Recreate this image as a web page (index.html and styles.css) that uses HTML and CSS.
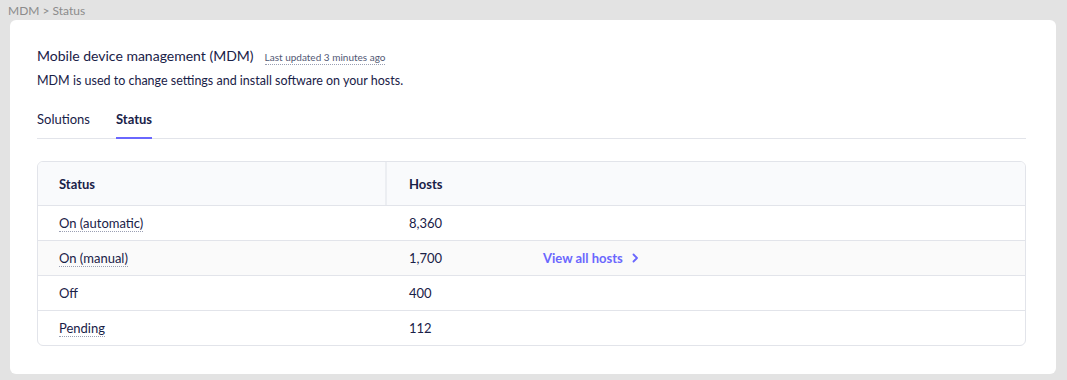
FILE: index.html
```html
<!DOCTYPE html>
<html>
<head>
<meta charset="utf-8">
<link rel="stylesheet" href="styles.css">
</head>
<body>
<div class="page">
  <div class="crumb">MDM &gt; Status</div>
  <div class="card">
    <div class="title-row">
      <h1 class="title">Mobile device management (MDM)</h1>
      <span class="updated">Last updated 3 minutes ago</span>
    </div>
    <p class="desc">MDM is used to change settings and install software on your hosts.</p>
    <div class="tabs">
      <div class="tab">Solutions</div>
      <div class="tab active">Status</div>
    </div>
    <div class="table">
      <div class="row head">
        <div class="c1">Status</div>
        <div class="c2">Hosts</div>
        <div class="c3"></div>
      </div>
      <div class="row">
        <div class="c1"><span class="dotted">On (automatic)</span></div>
        <div class="c2">8,360</div>
        <div class="c3"></div>
      </div>
      <div class="row hover">
        <div class="c1"><span class="dotted">On (manual)</span></div>
        <div class="c2">1,700</div>
        <div class="c3"><span class="link">View all hosts <svg width="8" height="10" viewBox="0 0 8 10"><path d="M2.5 1.5 L6 5 L2.5 8.5" fill="none" stroke="#6a67fe" stroke-width="1.8" stroke-linecap="round" stroke-linejoin="round"/></svg></span></div>
      </div>
      <div class="row">
        <div class="c1">Off</div>
        <div class="c2">400</div>
        <div class="c3"></div>
      </div>
      <div class="row last">
        <div class="c1"><span class="dotted">Pending</span></div>
        <div class="c2">112</div>
        <div class="c3"></div>
      </div>
    </div>
  </div>
</div>
</body>
</html>
```
FILE: styles.css
```css
html, body {
  margin: 0;
  padding: 0;
  background: #e3e3e3;
  font-family: Lato, "Noto Sans", sans-serif;
  color: #192147;
}
*, *::before, *::after {
  box-sizing: border-box;
}
.page {
  padding: 4px 11px 0 10px;
}
.crumb {
  font-size: 12px;
  color: #8b8b8b;
  line-height: 14px;
  margin-left: -2px;
  height: 16px;
}
.card {
  background: #fff;
  border-radius: 6px;
  padding: 26px 30px 28px 27px;
}
.title-row {
  display: flex;
  align-items: baseline;
  gap: 11px;
}
.title {
  margin: 0;
  font-size: 14px;
  font-weight: 400;
  line-height: 20px;
}
.updated {
  font-size: 10px;
  color: #515774;
  border-bottom: 1px dotted #9a9fb3;
  line-height: 14px;
}
.desc {
  margin: 6px 0 0;
  font-size: 12.5px;
  line-height: 18px;
}
.tabs {
  display: flex;
  gap: 26px;
  margin-top: 11px;
  border-bottom: 1px solid #e2e4ea;
}
.tab {
  font-size: 13px;
  line-height: 18px;
  padding: 9px 0 9px;
  border-bottom: 2px solid transparent;
  margin-bottom: -1px;
}
.tab.active {
  font-weight: 700;
  border-bottom-color: #6a67fe;
}
.table {
  margin-top: 22px;
  border: 1px solid #e2e4ea;
  border-radius: 6px;
  overflow: hidden;
}
.row {
  display: flex;
  height: 35px;
  align-items: center;
  border-bottom: 1px solid #e2e4ea;
  font-size: 13px;
}
.row.last {
  border-bottom: none;
  height: 34px;
}
.row.head {
  height: 44px;
  background: #f9fafc;
  font-weight: 700;
}
.row.hover {
  background: #fafafa;
}
.c1 {
  width: 349px;
  padding-left: 21px;
  align-self: stretch;
  display: flex;
  align-items: center;
}
.row.head .c1 {
  border-right: 2px solid #eceef2;
}
.c2 {
  width: 156px;
  padding-left: 22px;
}
.c3 {
  flex: 1;
}
.dotted {
  border-bottom: 1px dotted #9a9fb3;
  line-height: 16px;
}
.link {
  color: #6a67fe;
  font-weight: 700;
  display: inline-flex;
  align-items: center;
  gap: 8px;
}
```
